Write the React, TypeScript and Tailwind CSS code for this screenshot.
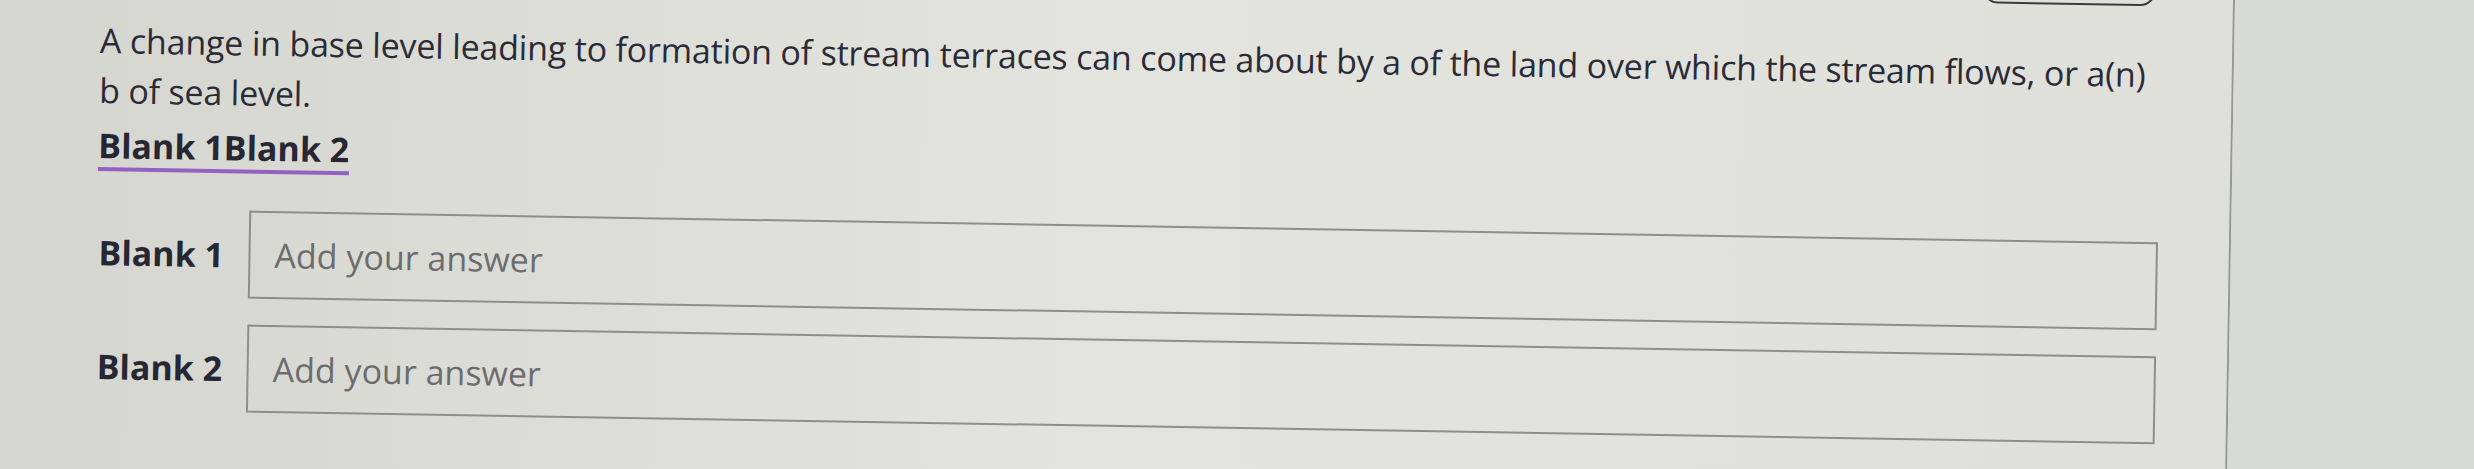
import { useState } from "react";

const blanks = ["Blank 1", "Blank 2"];

function BlankRow({ label }: { label: string }) {
  const [value, setValue] = useState("");
  return (
    <div className="flex items-center">
      <label className="w-[150px] shrink-0 text-[34px] leading-[44px] font-bold text-[#272734]">{label}</label>
      <div className="h-[88px] w-[1909px] border-2 border-[#8e8e8c] flex items-center pl-6">
        <input
          value={value}
          onChange={(e) => setValue(e.target.value)}
          placeholder="Add your answer"
          className="w-full bg-transparent text-[34px] text-[#2b2b38] outline-none placeholder:text-[#6c6c6e]"
        />
      </div>
    </div>
  );
}

export default function App() {
  return (
    <div className="h-[469px] w-[2474px] overflow-hidden bg-[#dcdcd6] font-['Open_Sans',sans-serif]">
      {/* page is slightly tilted */}
      <div className="-ml-[40px] -mt-[60px] flex h-[589px] w-[2554px] rotate-[0.95deg]">
        <main className="w-[2269px] shrink-0 bg-gradient-to-r from-[#d5d5cf] via-[#e4e4de] to-[#dfe0da]">
          <div className="flex h-[51px] justify-end pr-[77px]">
            <button className="h-[51px] w-[174px] rounded-[16px] border-2 border-[#3b3b40]" />
          </div>

          <div className="mt-[43px] pl-[137px]">
            <p className="text-[34px] leading-[50px] tracking-[-0.2px] text-[#2b2b38]">
              A change in base level leading to formation of stream terraces can come about by a of the land over which the stream flows, or a(n)
              <br />b of sea level.
            </p>
            <div className="mt-[8px]">
              <span className="inline-block border-b-4 border-[#9461c2] text-[34px] leading-[44px] font-bold text-[#272734]">
                Blank 1Blank 2
              </span>
            </div>
          </div>

          <div className="mt-[37px] flex flex-col gap-[26px] pl-[139px]">
            {blanks.map((b) => (
              <BlankRow key={b} label={b} />
            ))}
          </div>
        </main>
        <div className="w-[2px] shrink-0 bg-[#979795]" />
        <aside className="flex-1 bg-[#d8dbd3]" />
      </div>
    </div>
  );
}
